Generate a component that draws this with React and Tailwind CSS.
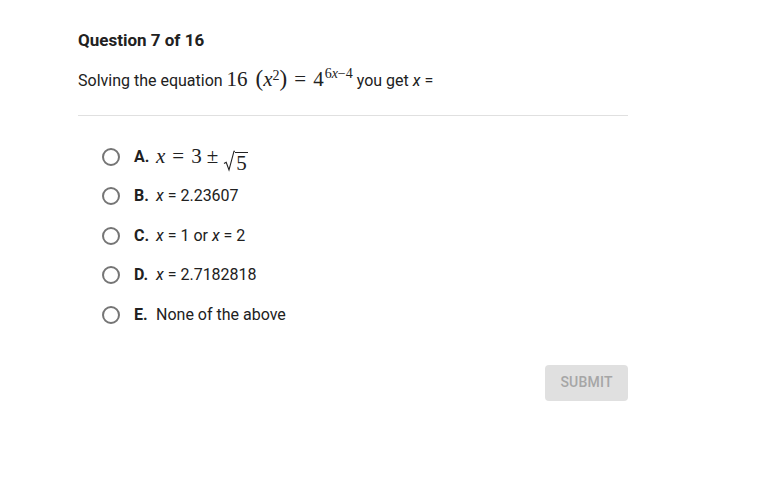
import React, { useState } from 'react';

const serif = { fontFamily: '"Liberation Serif", "DejaVu Serif", serif' };

const Var = ({ children }) => <span className="italic">{children}</span>;

const Sqrt = ({ children }) => (
    <span className="inline-flex items-end">
        <svg width="12" height="22" viewBox="0 0 12 22" className="mb-[1px]">
            <path d="M1 13.5 L3.2 12.2 L6 20 L11 1.2 L12 1.2" fill="none" stroke="#212121" strokeWidth="1.1" />
        </svg>
        <span className="border-t-[1.2px] border-[#212121] leading-[20px] pl-[1px] pr-[1px]">{children}</span>
    </span>
);

const options = [
    {
        key: 'A',
        content: (
            <span className="text-[21px] text-[#212121] inline-flex items-end" style={serif}>
                <Var>x</Var>
                <span className="mx-[7px]">=</span>3<span className="mx-[5px]">±</span>
                <Sqrt>5</Sqrt>
            </span>
        ),
    },
    { key: 'B', content: <span><Var>x</Var> = 2.23607</span> },
    { key: 'C', content: <span><Var>x</Var> = 1 or <Var>x</Var> = 2</span> },
    { key: 'D', content: <span><Var>x</Var> = 2.7182818</span> },
    { key: 'E', content: <span>None of the above</span> },
];

export default function App() {
    const [selected, setSelected] = useState(null);

    return (
        <div className="min-h-screen bg-white text-[#212121]" style={{ fontFamily: 'Roboto, "Liberation Sans", sans-serif' }}>
            <div className="w-[550px] ml-[78px] pt-[28px]">
                <h2 className="text-[17px] font-bold leading-[24px]">Question 7 of 16</h2>

                <p className="mt-[12px] text-[16px] leading-[30px] flex items-baseline">
                    <span>Solving the equation&nbsp;</span>
                    <span className="text-[21px]" style={serif}>
                        16<span className="ml-[8px] text-[23px]">(</span><Var>x</Var><sup className="text-[14px] relative top-[-6px]">2</sup><span className="text-[23px]">)</span>
                        <span className="mx-[7px]">=</span>4<sup className="text-[14px] relative top-[-8px] ml-[1px]"><span>6</span><Var>x</Var><span>−4</span></sup>
                    </span>
                    <span>&nbsp;you get <Var>x</Var> =</span>
                </p>

                <div className="mt-[19px] border-t border-[#e0e0e0]" />

                <ul className="mt-[21px] pl-[24px]">
                    {options.map((opt) => (
                        <li
                            key={opt.key}
                            onClick={() => setSelected(opt.key)}
                            className="h-[39.5px] flex items-center cursor-pointer text-[16px]"
                        >
                            <span className="w-[18px] h-[18px] rounded-full border-2 border-[#757575] flex items-center justify-center">
                                {selected === opt.key && <span className="w-[8px] h-[8px] rounded-full bg-[#757575]" />}
                            </span>
                            <span className="ml-[14px] font-bold w-[22px]">{opt.key}.</span>
                            {opt.content}
                        </li>
                    ))}
                </ul>

                <div className="mt-[30px] flex justify-end">
                    <button
                        type="button"
                        disabled={!selected}
                        className="w-[83px] h-[36px] rounded-[4px] bg-[#e0e0e0] text-[#a6a6a6] text-[14px] font-medium tracking-[0.2px]"
                    >
                        SUBMIT
                    </button>
                </div>
            </div>
        </div>
    );
}
